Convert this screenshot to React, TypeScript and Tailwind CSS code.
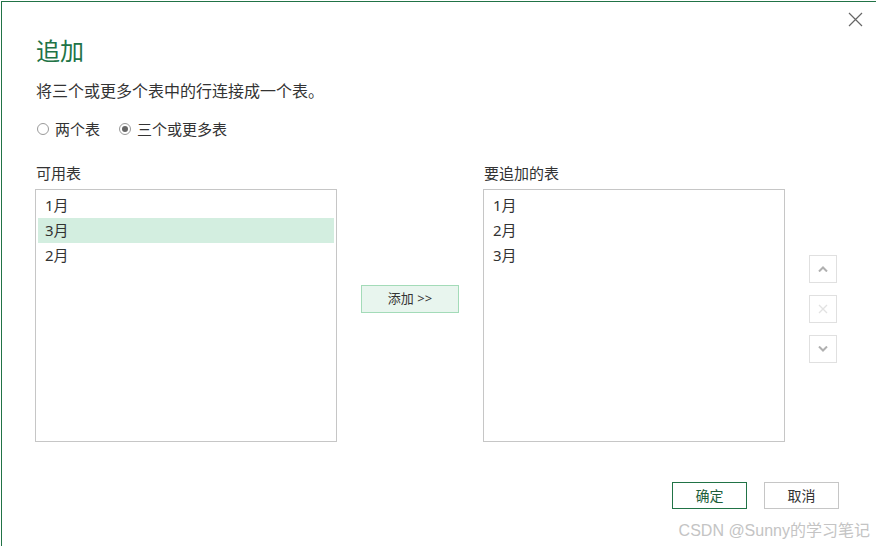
import React from "react";

const FONT = { fontFamily: '"Noto Sans", "Noto Sans CJK SC", sans-serif' };

function ListBox({ items, selected }: { items: string[]; selected?: string }) {
  return (
    <div className="h-[253px] w-[302px] border border-[#c6c6c6] bg-white px-[2px] pt-[3px]">
      {items.map((item) => (
        <div
          key={item}
          className={
            "flex h-[25px] items-center pl-[7px] text-[15px] text-[#333] " +
            (item === selected ? "bg-[#d3eee0]" : "")
          }
        >
          {item}
        </div>
      ))}
    </div>
  );
}

function SideButton({ children }: { children: React.ReactNode }) {
  return (
    <button
      type="button"
      className="flex h-[28px] w-[28px] items-center justify-center border border-[#e0e0e0] bg-white"
    >
      {children}
    </button>
  );
}

function Radio({ checked, label }: { checked?: boolean; label: string }) {
  return (
    <label className="flex items-center gap-[6px]">
      <span className="flex h-[12px] w-[12px] items-center justify-center rounded-full border border-[#9a9a9a] bg-white">
        {checked && <span className="h-[6px] w-[6px] rounded-full bg-[#666]" />}
      </span>
      <span>{label}</span>
    </label>
  );
}

export default function App() {
  return (
    <div className="relative h-[546px] w-[876px] overflow-hidden bg-white pl-px pt-px" style={FONT}>
      <div className="relative flex h-full flex-col border-l border-t border-[#217346] pl-[33px] text-[#333]">
        <button type="button" className="absolute right-[12px] top-[9px] p-[1px]" aria-label="关闭">
          <svg width="15" height="15" viewBox="0 0 15 15" fill="none" stroke="#666" strokeWidth="1.2">
            <path d="M1 1L14 14M14 1L1 14" />
          </svg>
        </button>

        <h1 className="mt-[33px] pl-px text-[24px] leading-[32px] text-[#217346]">追加</h1>
        <p className="mt-[12px] pl-px text-[16px] leading-[24px]">将三个或更多个表中的行连接成一个表。</p>

        <div className="mt-[16px] flex items-center gap-[19px] pl-[2px] text-[15px] leading-[20px]">
          <Radio label="两个表" />
          <Radio checked label="三个或更多表" />
        </div>

        <div className="mt-[24px] flex">
          <div className="flex flex-col">
            <div className="pl-[1px] text-[15px] leading-[20px]">可用表</div>
            <div className="mt-[6px]">
              <ListBox items={["1月", "3月", "2月"]} selected="3月" />
            </div>
          </div>

          <div className="w-[146px] pl-[24px] pt-[122px]">
            <button
              type="button"
              className="flex h-[28px] w-[98px] items-center justify-center border border-[#a3dbb8] bg-[#e8f5ee] text-[13px] text-[#333]"
            >
              添加 &gt;&gt;
            </button>
          </div>

          <div className="flex flex-col">
            <div className="pl-[1px] text-[15px] leading-[20px]">要追加的表</div>
            <div className="mt-[6px]">
              <ListBox items={["1月", "2月", "3月"]} />
            </div>
          </div>

          <div className="ml-[24px] flex flex-col gap-[12px] pt-[92px]">
            <SideButton>
              <svg width="10" height="6" viewBox="0 0 10 6" fill="none" stroke="#b0b0b0" strokeWidth="2">
                <path d="M1 5.5L5 1.5L9 5.5" />
              </svg>
            </SideButton>
            <SideButton>
              <svg width="10" height="10" viewBox="0 0 10 10" fill="none" stroke="#e2e2e2" strokeWidth="1.3">
                <path d="M1 1L9 9M9 1L1 9" />
              </svg>
            </SideButton>
            <SideButton>
              <svg width="10" height="6" viewBox="0 0 10 6" fill="none" stroke="#b0b0b0" strokeWidth="2">
                <path d="M1 0.5L5 4.5L9 0.5" />
              </svg>
            </SideButton>
          </div>
        </div>

        <div className="mt-[40px] flex justify-end gap-[17px] pr-[37px]">
          <button
            type="button"
            className="flex h-[27px] w-[75px] items-center justify-center border border-[#217346] text-[14px] text-[#1d5e3b]"
          >
            确定
          </button>
          <button
            type="button"
            className="flex h-[27px] w-[75px] items-center justify-center border border-[#c6c6c6] text-[14px] text-[#333]"
          >
            取消
          </button>
        </div>
      </div>

      <div
        className="absolute bottom-[5px] right-[6px] text-[16px] leading-[20px] text-[#c4c4c4]"
        style={{ fontFamily: '"Liberation Sans", "Noto Sans CJK SC", sans-serif' }}
      >
        CSDN @Sunny的学习笔记
      </div>
    </div>
  );
}
